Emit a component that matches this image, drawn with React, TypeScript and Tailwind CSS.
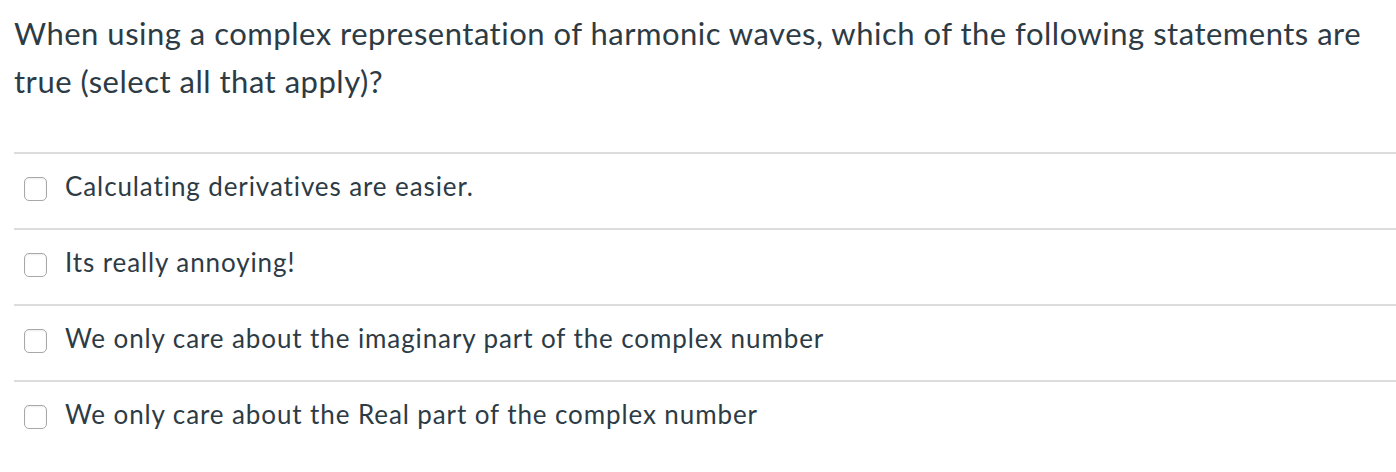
const answers = [
  'Calculating derivatives are easier.',
  'Its really annoying!',
  'We only care about the imaginary part of the complex number',
  'We only care about the Real part of the complex number',
];

export default function App() {
  return (
    <div className="w-[1396px] h-[472px] bg-white text-[#2d3b45] font-['Lato','Liberation_Sans',sans-serif] overflow-hidden">
      <p className="pl-[14px] pr-4 pt-[9px] text-[31px] leading-[48px] tracking-[0.5px]">
        When using a complex representation of harmonic waves, which of the following statements are true (select all that apply)?
      </p>
      <div className="mt-[47px] ml-[14px]">
        {answers.map((a) => (
          <label key={a} className="flex h-[76px] items-center border-t-2 border-[#dcdcdc] pb-1">
            <span className="ml-[10px] mr-[18px] h-[24px] w-[23px] shrink-0 rounded-[5px] border border-[#a8a8a8] bg-white shadow-[inset_0_1px_2px_rgba(0,0,0,0.08)]" />
            <span className="mb-[5px] text-[26px] tracking-[0.9px]">{a}</span>
          </label>
        ))}
      </div>
    </div>
  );
}
